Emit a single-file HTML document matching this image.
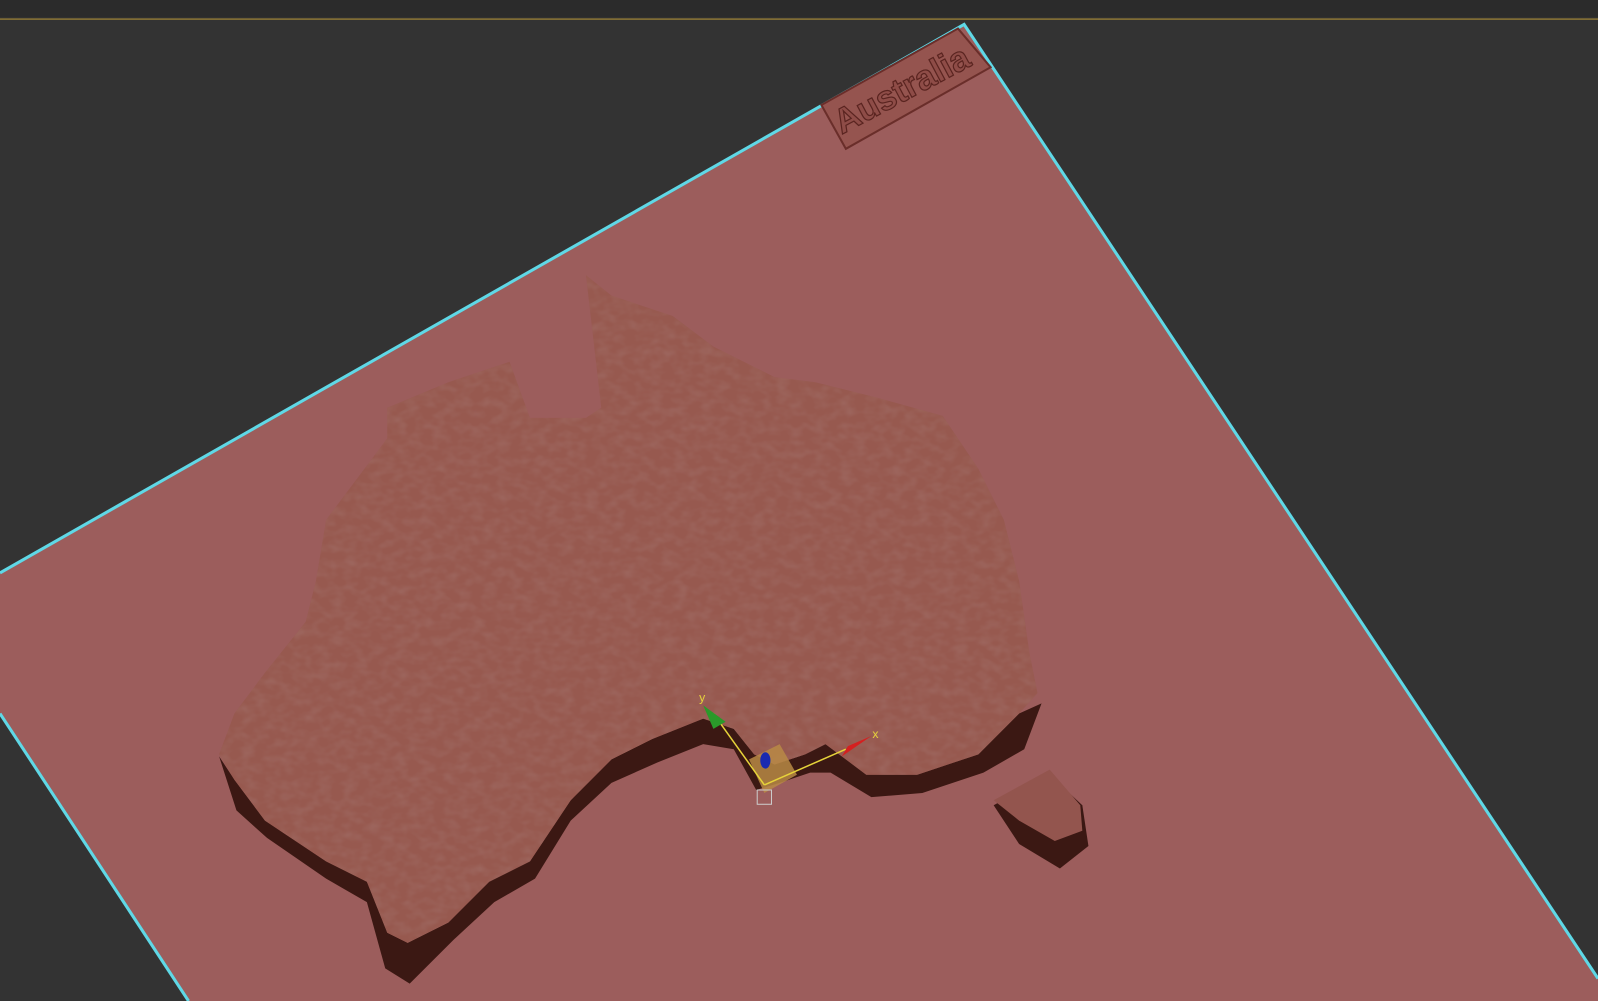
<!DOCTYPE html>
<html><head><style>
html,body{margin:0;padding:0;background:#333;width:1598px;height:1001px;overflow:hidden}
svg{display:block}
</style></head><body>
<svg width="1598" height="1001" viewBox="0 0 1568 982" preserveAspectRatio="none">
<defs>
<filter id="n" x="0" y="0" width="100%" height="100%">
<feTurbulence type="fractalNoise" baseFrequency="0.08 0.12" numOctaves="2" seed="3"/>
<feColorMatrix values="0 0 0 0 0.35  0 0 0 0 0.15  0 0 0 0 0.13  0 0 0 1.2 -0.45"/>
</filter>
<clipPath id="land"><path d="M380,400 L440,375 L500,355 L520,410 L575,410 L590,400 L575,270 L600,290 L660,310 L700,340 L760,370 L800,375 L860,390 L925,408 L960,460 L985,510 L1000,570 L1010,640 L1018,680 L1000,700 L960,740 L900,760 L850,760 L810,730 L790,740 L760,750 L740,740 L720,715 L690,705 L640,725 L600,745 L560,785 L520,845 L480,865 L440,905 L400,925 L380,915 L360,865 L320,845 L260,805 L230,765 L215,740 L230,700 L260,660 L300,610 L310,570 L320,510 L350,470 L380,430 Z"/></clipPath>
</defs>
<rect width="1568" height="982" fill="#333333"/>
<rect width="1568" height="17" fill="#2b2b2b"/>
<rect y="18" width="1568" height="1.5" fill="#8a7436"/>
<polygon points="946,24 1568,960 1568,982 185,982 0,700 0,562" fill="#9c5d5c"/>
<polyline points="0,562 946,24 1568,960" fill="none" stroke="#5fd8e6" stroke-width="3"/>
<polyline points="0,700 185,982" fill="none" stroke="#5fd8e6" stroke-width="3"/>
<polygon points="806,103 940,28 972,66 830,146" fill="#95544f" stroke="#6a2e2a" stroke-width="2"/>
<text x="0" y="0" transform="translate(826,132) rotate(-28)" font-family="Liberation Sans, sans-serif" font-weight="bold" font-size="34" fill="#8e4c47" stroke="#5a2420" stroke-width="1.2">Australia</text>
<path d="M215,742 L232,795 L262,822 L320,862 L360,885 L378,950 L402,965 L445,922 L485,885 L525,862 L560,805 L600,768 L645,748 L690,730 L720,735 L742,775 L765,768 L795,758 L815,758 L855,782 L905,778 L965,758 L1005,735 L1022,690 L1000,700 L960,740 L900,760 L850,760 L810,730 L790,740 L760,750 L740,740 L720,715 L690,705 L640,725 L600,745 L560,785 L520,845 L480,865 L440,905 L400,925 L380,915 L360,865 L320,845 L260,805 L230,765 Z" fill="#3b1813"/>
<path d="M975,790 L1030,760 L1062,790 L1068,830 L1040,852 L1000,828 Z" fill="#3b1813"/>
<path d="M380,400 L440,375 L500,355 L520,410 L575,410 L590,400 L575,270 L600,290 L660,310 L700,340 L760,370 L800,375 L860,390 L925,408 L960,460 L985,510 L1000,570 L1010,640 L1018,680 L1000,700 L960,740 L900,760 L850,760 L810,730 L790,740 L760,750 L740,740 L720,715 L690,705 L640,725 L600,745 L560,785 L520,845 L480,865 L440,905 L400,925 L380,915 L360,865 L320,845 L260,805 L230,765 L215,740 L230,700 L260,660 L300,610 L310,570 L320,510 L350,470 L380,430 Z" fill="#97594f"/>
<path d="M975,785 L1030,755 L1060,790 L1062,815 L1035,825 L1000,805 Z" fill="#93554e"/>
<g clip-path="url(#land)">
<rect x="200" y="260" width="830" height="680" filter="url(#n)"/>
</g>
<polygon points="735,745 765,730 782,760 750,778" fill="#b88a45" opacity="0.85"/>
<line x1="700" y1="700" x2="750" y2="770" stroke="#e6d23a" stroke-width="1.5"/>
<line x1="750" y1="770" x2="830" y2="735" stroke="#e6d23a" stroke-width="1.5"/>
<polygon points="690,692 712,708 700,715" fill="#2a9a2a"/>
<polygon points="855,722 826,742 832,732" fill="#d42020"/>
<ellipse cx="751" cy="746" rx="5" ry="8" fill="#1a2ab0"/>
<rect x="743" y="775" width="14" height="14" fill="none" stroke="#ccc" stroke-width="1"/>
<text x="686" y="688" font-family="Liberation Sans,sans-serif" font-size="12" fill="#e6d23a">y</text>
<text x="856" y="724" font-family="Liberation Sans,sans-serif" font-size="12" fill="#e6d23a">x</text>
</svg>
</body></html>
